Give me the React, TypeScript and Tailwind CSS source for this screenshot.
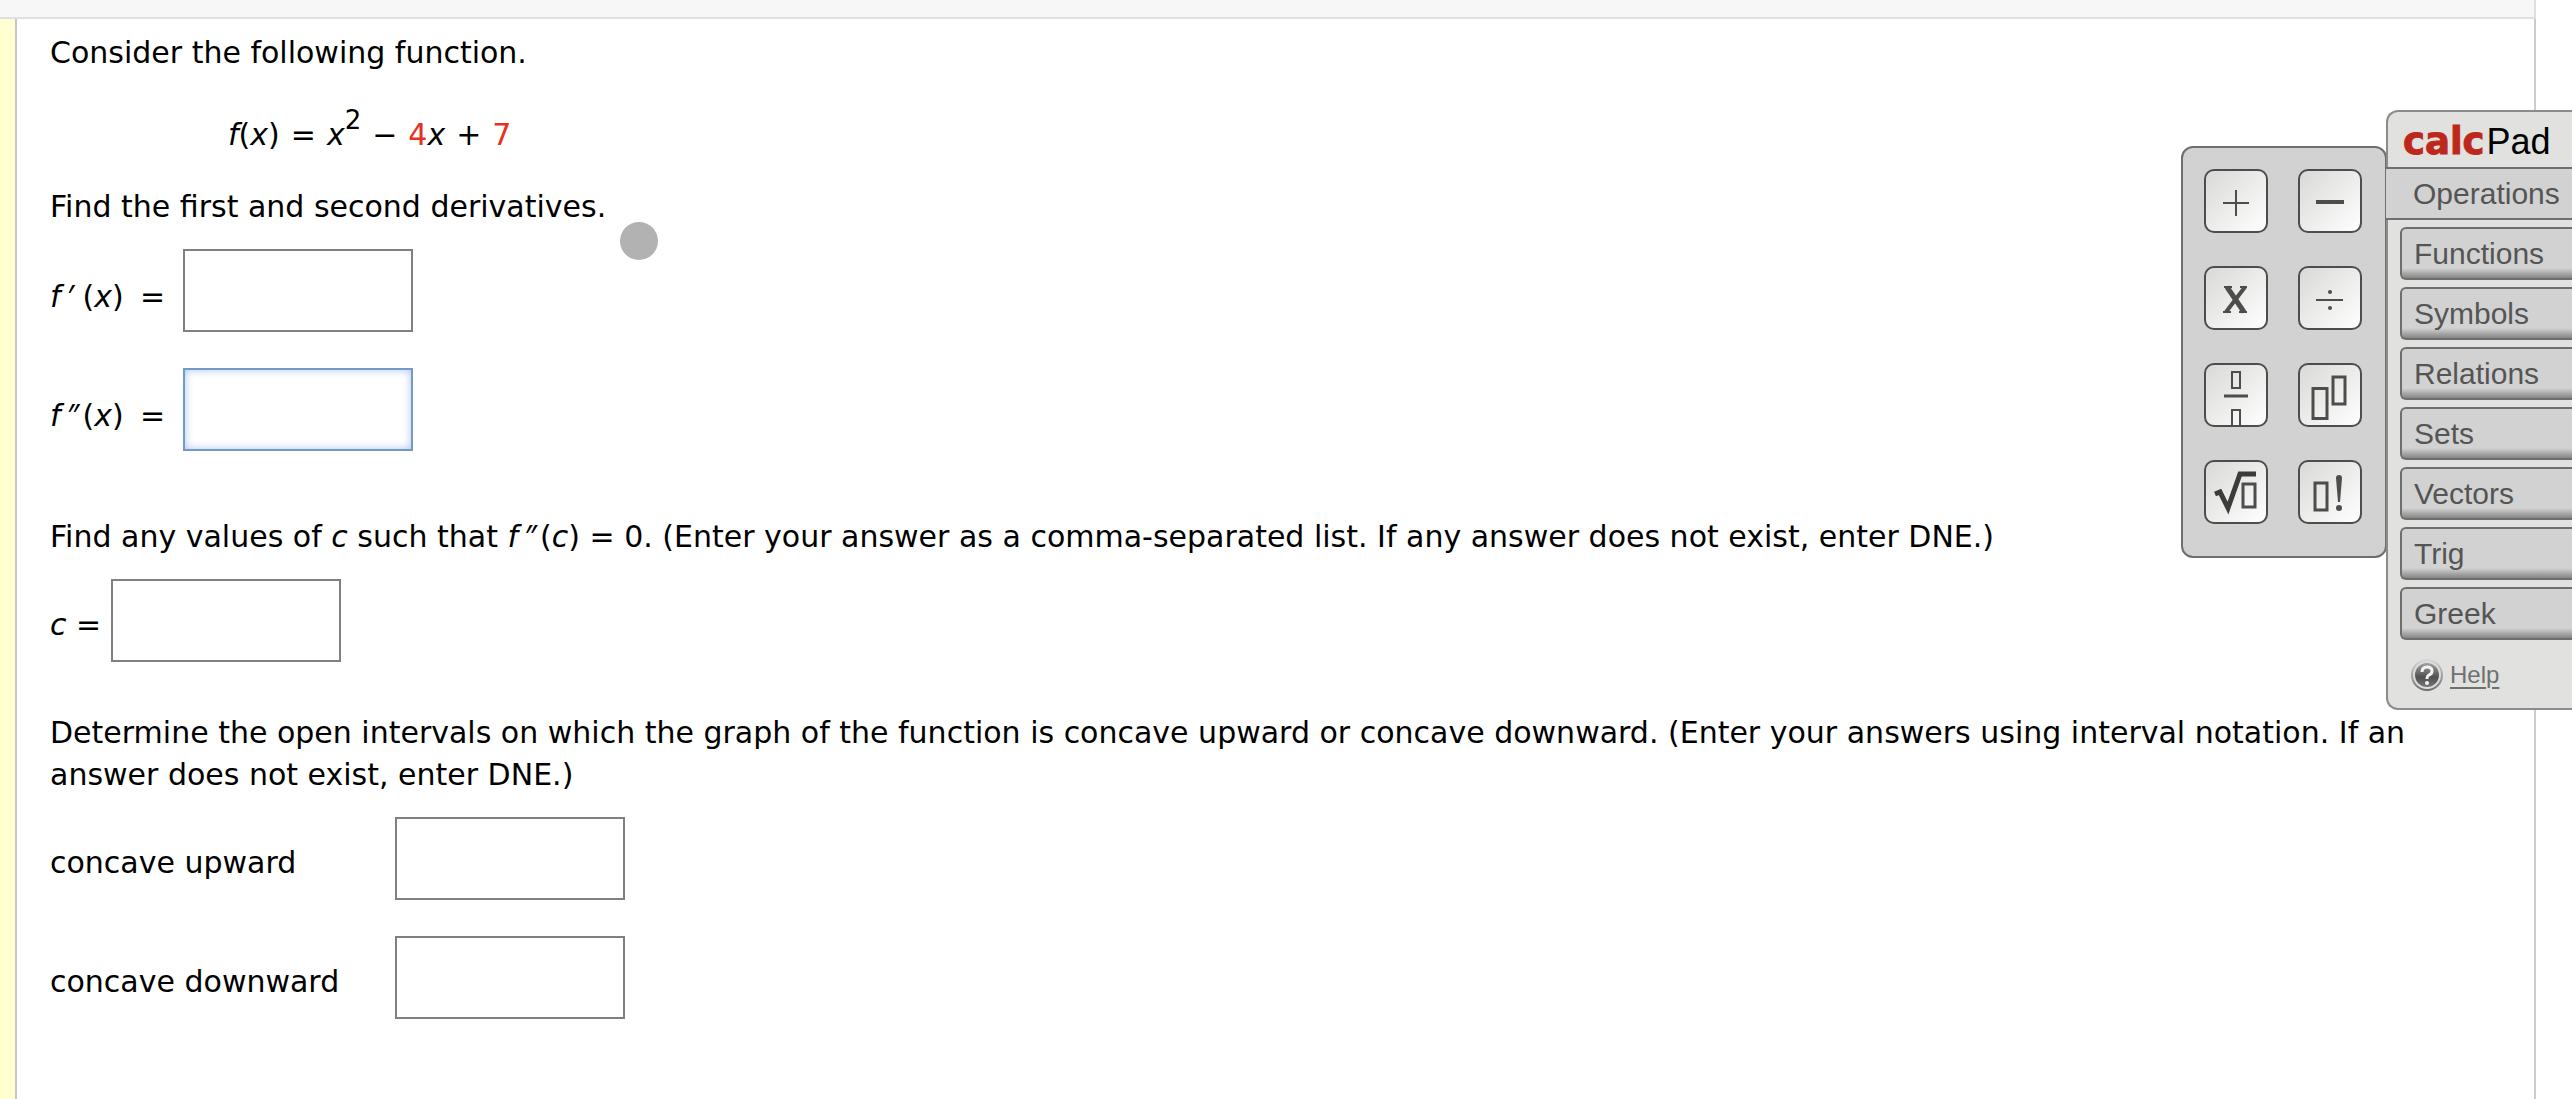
import type { ReactNode } from "react";

const TABS = ["Functions", "Symbols", "Relations", "Sets", "Vectors", "Trig", "Greek"];

const KEYS: { name: string; icon: ReactNode }[] = [
  { name: "Add", icon: <path d="M19 34h26M32 21v26" strokeWidth="2" /> },
  { name: "Subtract", icon: <path d="M18 33h28" strokeWidth="4" /> },
  {
    name: "Multiply",
    icon: (
      <>
        <path d="M23 21 40 46" strokeWidth="5" />
        <path d="M41 21 22 46" strokeWidth="4" />
        <path d="M20 21h8M36 21h7M19 46h8M35 46h8" strokeWidth="2" />
      </>
    ),
  },
  {
    name: "Divide",
    icon: (
      <>
        <path d="M18 34h27" strokeWidth="2" />
        <circle cx="32" cy="26" r="2" fill="#4d4d4d" stroke="none" />
        <circle cx="32" cy="42" r="2" fill="#4d4d4d" stroke="none" />
      </>
    ),
  },
  {
    name: "Fraction",
    icon: (
      <>
        <path d="M28 9h8v16h-8zM28 63v-16h8v16" strokeWidth="2" />
        <path d="M20 33h24" strokeWidth="3" />
      </>
    ),
  },
  {
    name: "Power",
    icon: <path d="M15 25.5h14v30h-14zM35 14h12v27h-12z" strokeWidth="3" />,
  },
  {
    name: "Square root",
    icon: (
      <>
        <path d="M11 34l5-2 8 16 12-34h16" stroke="#3c3c3c" strokeWidth="5" />
        <path d="M39 24h12v23h-12z" strokeWidth="3" />
      </>
    ),
  },
  {
    name: "Factorial",
    icon: (
      <>
        <path d="M17 23h12v27h-12z" strokeWidth="3" />
        <path d="M38 18q0-3 3-3t3 3l-2 24h-2z" fill="#4d4d4d" stroke="none" />
        <circle cx="41" cy="48" r="3" fill="#4d4d4d" stroke="none" />
      </>
    ),
  },
];

function AnswerBox({ id, active = false }: { id: string; active?: boolean }) {
  return (
    <input
      id={id}
      type="text"
      className={
        active
          ? "h-[83px] w-[230px] border-2 border-[#7399c6] bg-white px-3 shadow-[inset_0_0_8px_#a9c4ee] outline-none"
          : "h-[83px] w-[230px] border-2 border-[#808080] bg-white px-3 outline-none"
      }
    />
  );
}

// f with its prime marks, e.g. f″
function Derivative({ marks }: { marks: string }) {
  return (
    <i>
      f<span className="inline-block w-[22px] pl-1.5 font-['Noto_Sans'] leading-none">{marks}</span>
    </i>
  );
}

function Question() {
  return (
    <main className="min-w-0 flex-1 pl-[33px] pr-[90px] pt-[13px]">
      <p>Consider the following function.</p>
      <p className="mt-10 flex gap-[11px] pl-[178px]">
        <span>
          <i>f</i>(<i>x</i>)
        </span>
        <span>=</span>
        <span>
          <i>x</i>
          <sup className="-top-4 text-[26px] leading-none">2</sup>
        </span>
        <span>−</span>
        <span>
          <span className="text-[#e8301f]">4</span>
          <i>x</i>
        </span>
        <span>+</span>
        <span className="text-[#e8301f]">7</span>
      </p>
      <p className="mt-[30px]">Find the first and second derivatives.</p>

      <div className="mt-[21px] grid grid-cols-[133px_auto] items-center justify-start gap-y-9">
        <label htmlFor="first" className="flex pt-3">
          <span className="w-[90px]">
            <Derivative marks="′" />(<i>x</i>)
          </span>
          =
        </label>
        <AnswerBox id="first" />
        <label htmlFor="second" className="flex pt-3">
          <span className="w-[90px]">
            <Derivative marks="″" />(<i>x</i>)
          </span>
          =
        </label>
        <AnswerBox id="second" active />
      </div>

      <p className="mt-[65px]">
        Find any values of <i>c</i> such that <Derivative marks="″" />(<i>c</i>) = 0. (Enter your answer as a
        comma-separated list. If any answer does not exist, enter DNE.)
      </p>
      <div className="mt-[21px] grid grid-cols-[61px_auto] items-center justify-start">
        <label htmlFor="c" className="pt-2">
          <i>c</i> =
        </label>
        <AnswerBox id="c" />
      </div>

      <p className="mt-[50px]">
        Determine the open intervals on which the graph of the function is concave upward or concave downward. (Enter
        your answers using interval notation. If an answer does not exist, enter DNE.)
      </p>
      <div className="mt-[21px] grid grid-cols-[345px_auto] items-center justify-start gap-y-9">
        <label htmlFor="upward" className="pt-2">
          concave upward
        </label>
        <AnswerBox id="upward" />
        <label htmlFor="downward" className="pt-2">
          concave downward
        </label>
        <AnswerBox id="downward" />
      </div>
    </main>
  );
}

function HelpIcon() {
  return (
    <svg viewBox="0 0 34 34" className="size-[34px]" aria-hidden="true">
      <defs>
        <linearGradient id="help-ring" x1="0" y1="0" x2="0" y2="1">
          <stop offset="0" stopColor="#d6d6d6" />
          <stop offset="1" stopColor="#707070" />
        </linearGradient>
        <linearGradient id="help-fill" x1="0" y1="0" x2="0" y2="1">
          <stop offset="0" stopColor="#a0a0a0" />
          <stop offset="0.6" stopColor="#505050" />
          <stop offset="1" stopColor="#777777" />
        </linearGradient>
      </defs>
      <circle cx="17" cy="17" r="15" fill="#dcdcdc" stroke="url(#help-ring)" strokeWidth="2" />
      <circle cx="17" cy="17" r="12" fill="url(#help-fill)" />
      <path d="M12 14q0-5 5-5t5 4q0 3-3 4-2 1-2 4" fill="none" stroke="#f2f2f2" strokeWidth="3" />
      <circle cx="17" cy="25" r="2" fill="#f2f2f2" />
    </svg>
  );
}

function CalcPad() {
  return (
    <aside className="absolute right-0 top-[110px] flex items-start font-['Liberation_Sans',Arial,sans-serif] text-[#555555]">
      <div className="mt-9 grid grid-cols-2 gap-x-[30px] gap-y-[33px] rounded-xl border-2 border-[#6e6e6e] bg-[#d2d2d2] pb-8 pl-[21px] pr-[23px] pt-[21px]">
        {KEYS.map(({ name, icon }) => (
          <button
            key={name}
            type="button"
            aria-label={name}
            className="size-16 rounded-[10px] border-2 border-[#4d4d4d] bg-linear-to-br from-[#d9d9d7] to-white"
          >
            <svg viewBox="2 2 60 60" className="size-full" fill="none" stroke="#4d4d4d" aria-hidden="true">
              {icon}
            </svg>
          </button>
        ))}
      </div>
      <div className="-ml-px w-[186px] rounded-bl-xl rounded-tl-xl border-y-2 border-l-2 border-[#8c8c8c] bg-[#e1e1df]">
        <h2 className="flex h-[55px] items-baseline gap-0.5 pl-[15px] pt-1.5 text-[36px] leading-[48px] text-black">
          <span className="font-['DejaVu_Sans'] text-[37px] font-bold text-[#be271b] [-webkit-text-stroke:1px_#be271b]">
            calc
          </span>
          <span>Pad</span>
        </h2>
        <button
          type="button"
          className="-ml-0.5 block h-[53px] w-[186px] border-y-2 border-[#6e6e6e] bg-[#d2d2d2] pl-[27px] text-left text-[30px]"
        >
          Operations
        </button>
        <div className="flex flex-col gap-[7px] pl-3 pt-[7px]">
          {TABS.map((tab) => (
            <button
              key={tab}
              type="button"
              className="h-[53px] rounded-l-md border-2 border-r-0 border-[#6e6e6e] bg-linear-to-b from-[#d2d2d2] from-80% to-[#858585] pl-3 text-left text-[30px]"
            >
              {tab}
            </button>
          ))}
        </div>
        <div className="flex items-center gap-1.5 pb-4 pl-[22px] pt-[18px]">
          <HelpIcon />
          <a href="#help" className="text-2xl text-[#707070] underline decoration-2 underline-offset-4">
            Help
          </a>
        </div>
      </div>
    </aside>
  );
}

export default function App() {
  return (
    <div className="relative flex min-h-screen flex-col bg-white font-['DejaVu_Sans',Verdana,sans-serif] text-[30px] leading-[42px] text-black">
      <header className="mr-9 h-[19px] border-b-2 border-r-2 border-[#dfdfdf] bg-[#f7f7f7]" />
      <div className="mr-9 flex flex-1 border-r-2 border-[#cccccc]">
        <div className="w-[17px] border-r-2 border-[#c6c6c6] bg-[#ffffd2]" />
        <Question />
      </div>
      <CalcPad />
      {/* touch pointer */}
      <div className="pointer-events-none absolute left-[620px] top-[222px] size-[38px] rounded-full bg-[#b2b2b2]" />
    </div>
  );
}
